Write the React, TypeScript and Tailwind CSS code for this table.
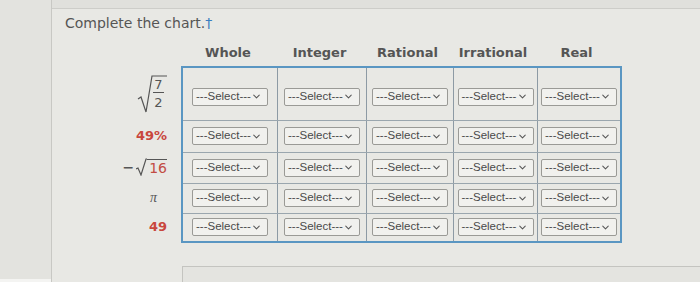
import { ChevronDown } from "lucide-react";

const columns = [
  { name: "Whole", width: "w-[94px]" },
  { name: "Integer", width: "w-[89px]" },
  { name: "Rational", width: "w-[87px]" },
  { name: "Irrational", width: "w-[84px]" },
  { name: "Real", width: "w-[83px]" },
];

function SelectBox() {
  return (
    <div className="flex h-[18px] w-[76px] shrink-0 items-center justify-between whitespace-nowrap rounded-[2px] border border-[#9a9a96] bg-[#f1f1ee] pl-[3px] pr-[5px] font-['Liberation_Sans',sans-serif] text-[11.5px] leading-none text-[#4a4a4a]">
      <span>---Select---</span>
      <ChevronDown size={11} strokeWidth={2.2} className="shrink-0 text-[#555]" />
    </div>
  );
}

function SqrtFraction() {
  return (
    <div className="relative h-[40px] w-[30px]">
      <svg width="30" height="40" viewBox="0 0 30 40" className="absolute left-0 top-0">
        <path d="M1 25 L4 23 L9 38 L15 2 L30 2" fill="none" stroke="#555" strokeWidth="1.2" />
      </svg>
      <div className="absolute left-[16px] top-[4px] flex flex-col items-center text-[13px] leading-[14px] text-[#555]">
        <span>7</span>
        <span className="h-px w-[11px] bg-[#555]" />
        <span className="mt-[3px]">2</span>
      </div>
    </div>
  );
}

function NegSqrt16() {
  return (
    <div className="flex items-center text-[14px] text-[#555]">
      <span className="mr-[2px] font-bold">−</span>
      <svg width="11" height="18" viewBox="0 0 11 18">
        <path d="M0 11 L2 10 L5 17 L10 1 L11 1" fill="none" stroke="#555" strokeWidth="1.2" />
      </svg>
      <span className="border-t-[1.2px] border-[#555] pl-[2px] pt-[1px] leading-none text-[#c24c43]">16</span>
    </div>
  );
}

const rows = [
  { label: <SqrtFraction />, height: "h-[52px]", pad: "pt-[6px]" },
  { label: <span className="text-[13px] font-bold text-[#c9463d]">49%</span>, height: "h-[32px]", pad: "" },
  { label: <NegSqrt16 />, height: "h-[31px]", pad: "" },
  { label: <span className="mr-[10px] font-['Liberation_Serif',serif] text-[14px] italic text-[#555]">π</span>, height: "h-[30px]", pad: "" },
  { label: <span className="text-[13px] font-bold text-[#c9463d]">49</span>, height: "h-[28px]", pad: "" },
];

export default function App() {
  return (
    <div className="flex h-[282px] w-[700px] overflow-hidden bg-[#e8e8e4] font-['DejaVu_Sans',sans-serif]">
      <div className="flex w-[52px] shrink-0 flex-col justify-end border-r border-[#c8c8c4] bg-[#e3e3df]">
        <div className="h-[3px] w-full bg-[#f4f4f2]" />
      </div>
      <div className="flex min-w-0 flex-1 flex-col">
        <div className="h-[9px] shrink-0 border-b border-[#cdcdc9] bg-[#e0e0dc]" />
        <div className="pl-[13px] pt-[4px] text-[14px] text-[#555]">
          Complete the chart.<span className="text-[#3a7ec0]">†</span>
        </div>

        <div className="mt-[9px] flex">
          <div className="w-[129px] shrink-0" />
          {columns.map((c) => (
            <div key={c.name} className={`${c.width} shrink-0 text-center text-[13px] font-bold text-[#555]`}>
              {c.name}
            </div>
          ))}
        </div>

        <div className="mt-[3px] flex">
          <div className="flex w-[129px] shrink-0 flex-col pt-[2px]">
            {rows.map((r, i) => (
              <div key={i} className={`${r.height} flex items-center justify-end pr-[14px]`}>
                {r.label}
              </div>
            ))}
          </div>
          <div className="shrink-0 border-2 border-[#5a96c2]">
            {rows.map((r, i) => (
              <div key={i} className={`flex ${r.height} ${i > 0 ? "border-t border-[#9aa6ae]" : ""}`}>
                {columns.map((c, j) => (
                  <div
                    key={c.name}
                    className={`${c.width} ${r.pad} flex shrink-0 items-center justify-center ${j > 0 ? "border-l border-[#8d9aa4]" : ""}`}
                  >
                    <SelectBox />
                  </div>
                ))}
              </div>
            ))}
          </div>
        </div>

        <div className="mt-[23px] ml-[130px] h-[30px] flex-1 border-l border-t border-[#c4c4c0] bg-[#e4e4e0]" />
      </div>
    </div>
  );
}
